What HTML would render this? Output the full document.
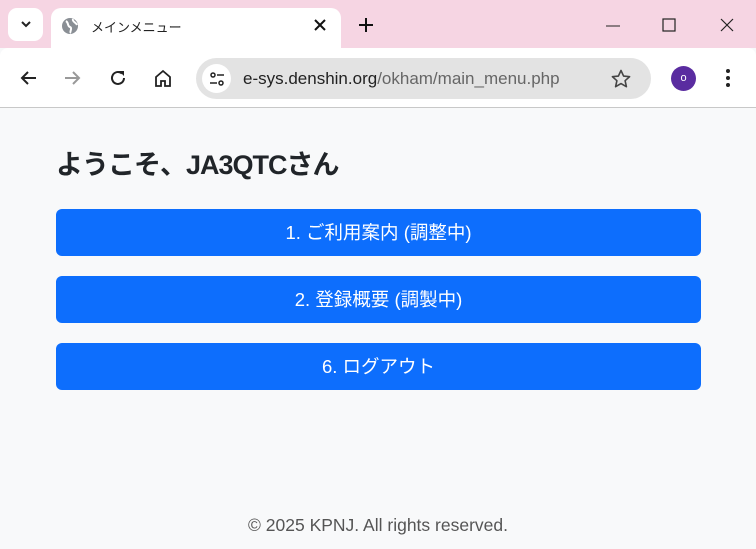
<!DOCTYPE html>
<html><head><meta charset="utf-8"><style>
*{margin:0;padding:0;box-sizing:border-box}
body{width:756px;height:549px;overflow:hidden;font-family:"Liberation Sans","Noto Sans CJK JP",sans-serif;background:#f8f9fa;position:relative}
.top{position:absolute;left:0;top:0;width:756px;height:48px;background:#f6d5e3}
.tabdd{position:absolute;left:8px;top:8px;width:35px;height:33px;background:#fff;border-radius:9px}
.tab{position:absolute;left:51px;top:8px;width:290px;height:42px;background:#fff;border-radius:10px 10px 0 0}
.bar{position:absolute;left:0;top:48px;width:756px;height:60px;background:#fff;border-bottom:1px solid #c8c8c8;border-radius:8px 8px 0 0}
.url{position:absolute;left:196px;top:58px;width:455px;height:41px;background:#e3e3e3;border-radius:21px}
h1{position:absolute;left:56px;top:143px;font-size:27px;font-weight:bold;color:#212529;letter-spacing:-1px}
.btn{position:absolute;left:56px;width:645px;height:47px;background:#0d6efd;border-radius:6px;color:#fff;font-size:18.5px;text-align:center;line-height:47px}
.foot{position:absolute;left:0;width:756px;top:515px;text-align:center;color:#555;font-size:17.5px}
</style></head><body>
<div class="top"></div>
<div class="tabdd"></div>
<svg style="position:absolute;left:20px;top:19px" width="12" height="10"><path d="M2 3l4 4 4-4" stroke="#222" stroke-width="2" fill="none"/></svg>
<div class="tab"></div>
<svg style="position:absolute;left:61px;top:17px" width="18" height="18"><circle cx="9" cy="9" r="8" fill="#8a8f95"/><path d="M5 4c3 2 1 5 4 6s-1 5 1 6M12 2c-1 3 3 3 4 6" stroke="#fff" stroke-width="2" fill="none"/></svg>
<div style="position:absolute;left:91px;top:17px;font-size:13px;color:#222">メインメニュー</div>
<svg style="position:absolute;left:314px;top:19px" width="12" height="12"><path d="M1 1l10 10M11 1L1 11" stroke="#111" stroke-width="2"/></svg>
<svg style="position:absolute;left:359px;top:18px" width="14" height="14"><path d="M7 0v14M0 7h14" stroke="#111" stroke-width="2"/></svg>
<svg style="position:absolute;left:606px;top:25px" width="14" height="2"><path d="M0 1h14" stroke="#222"/></svg>
<svg style="position:absolute;left:662px;top:18px" width="14" height="14"><rect x="1" y="1" width="12" height="12" fill="none" stroke="#222" stroke-width="1.2"/></svg>
<svg style="position:absolute;left:720px;top:18px" width="14" height="14"><path d="M1 1l12 12M13 1L1 13" stroke="#222" stroke-width="1.2"/></svg>
<div class="bar"></div>
<svg style="position:absolute;left:19px;top:70px" width="18" height="16"><path d="M17 8H3M9 2L3 8l6 6" stroke="#222" stroke-width="2" fill="none"/></svg>
<svg style="position:absolute;left:64px;top:70px" width="18" height="16"><path d="M1 8h14M9 2l6 6-6 6" stroke="#999" stroke-width="2" fill="none"/></svg>
<svg style="position:absolute;left:109px;top:69px" width="18" height="18"><path d="M15 9a6 6 0 1 1-2-4.5" stroke="#222" stroke-width="2" fill="none"/><path d="M10 2h5v5z" fill="#222"/></svg>
<svg style="position:absolute;left:154px;top:69px" width="18" height="18"><path d="M2 8l7-6 7 6v9h-5v-5H7v5H2z" stroke="#222" stroke-width="1.8" fill="none"/></svg>
<div class="url"></div>
<div style="position:absolute;left:202px;top:64px;width:29px;height:29px;background:#fff;border-radius:50%"></div>
<svg style="position:absolute;left:208px;top:70px" width="18" height="18"><circle cx="5" cy="5" r="2" stroke="#222" stroke-width="1.5" fill="none"/><path d="M9 5h7M2 13h7" stroke="#222" stroke-width="1.5"/><circle cx="13" cy="13" r="2" stroke="#222" stroke-width="1.5" fill="none"/></svg>
<div style="position:absolute;left:243px;top:69px;font-size:17px;color:#222">e-sys.denshin.org<span style="color:#666">/okham/main_menu.php</span></div>
<svg style="position:absolute;left:611px;top:69px" width="20" height="20"><path d="M10 1.5l2.6 5.6 6 .6-4.5 4 1.3 6-5.4-3.1-5.4 3.1 1.3-6-4.5-4 6-.6z" stroke="#444" stroke-width="1.6" fill="none" stroke-linejoin="round"/></svg>
<div style="position:absolute;left:671px;top:66px;width:25px;height:25px;background:#5a2ca0;border-radius:50%;color:#fff;font-size:11px;text-align:center;line-height:25px">o</div>
<svg style="position:absolute;left:725px;top:68px" width="6" height="20"><circle cx="3" cy="3" r="2" fill="#222"/><circle cx="3" cy="10" r="2" fill="#222"/><circle cx="3" cy="17" r="2" fill="#222"/></svg>
<h1>ようこそ、JA3QTCさん</h1>
<div class="btn" style="top:209px">1. ご利用案内 (調整中)</div>
<div class="btn" style="top:276px">2. 登録概要 (調製中)</div>
<div class="btn" style="top:343px">6. ログアウト</div>
<div class="foot">© 2025 KPNJ. All rights reserved.</div>
</body></html>
